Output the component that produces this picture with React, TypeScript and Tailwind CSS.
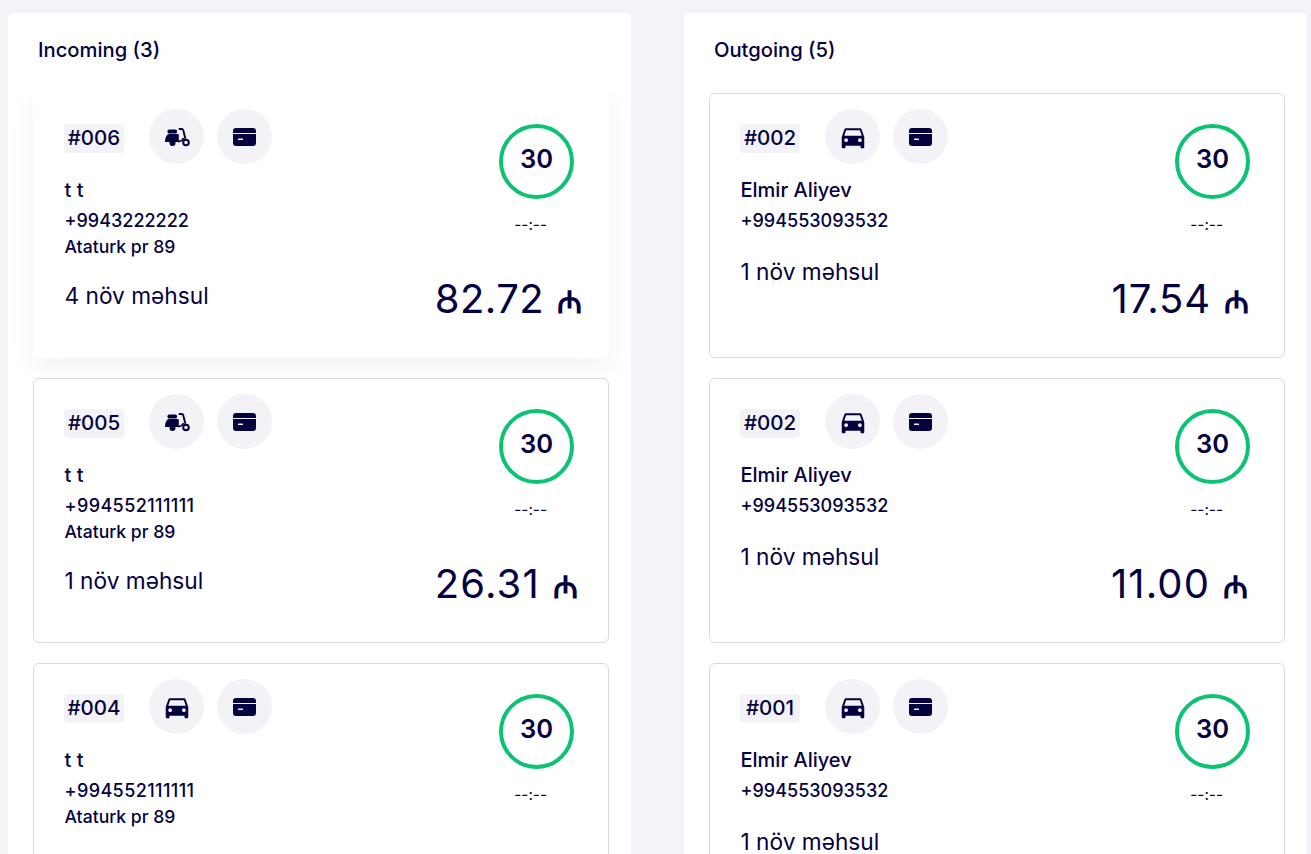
const navy = "text-[#04013f]";

function ScooterIcon() {
  return (
    <svg width="26" height="20" viewBox="0 0 26 20" fill="none">
      <rect x="3.500" y="2.500" width="9.500" height="4" rx="1.500" fill="#04013f" />
      <path d="M1 15c0-4.500 1.800-8 4.500-8h8c.8 0 1.300.5 1.300 1.200V14c0 .7-.5 1-1.300 1H1z" fill="#04013f" />
      <circle cx="8.500" cy="16" r="3" fill="#04013f" />
      <path d="M15.500 2h2.300c.8 0 1.200.4 1.400 1l2 8" stroke="#04013f" strokeWidth="1.900" strokeLinecap="round" />
      <path d="M14 14.500c2.500 0 4.500-1 5.500-3.500" stroke="#04013f" strokeWidth="1.800" />
      <circle cx="22" cy="15.500" r="2.800" stroke="#04013f" strokeWidth="2" />
    </svg>
  );
}

function CarIcon() {
  return (
    <svg width="30" height="30" viewBox="0 0 24 24" fill="#04013f">
      <path d="M18.92 6.01C18.72 5.42 18.16 5 17.5 5h-11c-.66 0-1.21.42-1.42 1.01L3 12v8c0 .55.45 1 1 1h1c.55 0 1-.45 1-1v-1h12v1c0 .55.45 1 1 1h1c.55 0 1-.45 1-1v-8l-2.08-5.99zM6.500 16c-.83 0-1.500-.67-1.500-1.500S5.670 13 6.500 13s1.500.67 1.500 1.500S7.330 16 6.500 16zm11 0c-.83 0-1.500-.67-1.500-1.500s.67-1.500 1.500-1.500 1.500.67 1.500 1.500-.67 1.500-1.500 1.500zM5 11l1.500-4.500h11L19 11H5z" />
    </svg>
  );
}

function PayCardIcon() {
  return (
    <svg width="23" height="18" viewBox="0 0 23 18">
      <rect width="23" height="18" rx="3" fill="#04013f" />
      <rect y="5" width="23" height="1" fill="#f3f3f7" />
      <rect x="5" y="10.500" width="5" height="1.500" rx=".5" fill="#f3f3f7" />
    </svg>
  );
}

function Round({ children }: { children: React.ReactNode }) {
  return (
    <div className="w-[55px] h-[55px] rounded-full bg-[#f3f3f7] flex items-center justify-center">
      {children}
    </div>
  );
}

type Order = {
  id: string;
  vehicle: "scooter" | "car";
  name: string;
  phone: string;
  phoneClass?: string;
  address?: string;
  count: string;
  price: string;
  priceClass: string;
  hovered?: boolean;
};

function OrderCard({ order }: { order: Order }) {
  return (
    <div
      className={
        "h-[265px] shrink-0 rounded-md flex justify-between bg-white " +
        (order.hovered
          ? "shadow-[0_8px_30px_rgba(4,1,63,0.06)]"
          : "border border-[#d9d9e6]")
      }
    >
      <div className={"flex flex-col " + (order.hovered ? "pl-[32px] pt-[16px]" : "pl-[31px] pt-[15px]")}>
        <div className="flex items-center">
          <span className="h-[29px] w-[60px] mt-[4px] -ml-[1px] rounded bg-[#f3f3f7] flex items-center justify-center text-[20.5px] font-medium">
            {order.id}
          </span>
          <div className="flex gap-[13px] ml-[25px]">
            <Round>{order.vehicle === "scooter" ? <ScooterIcon /> : <CarIcon />}</Round>
            <Round>
              <PayCardIcon />
            </Round>
          </div>
        </div>
        <p className="mt-[15px] -ml-[0.5px] text-[20px] leading-[22px] font-medium">{order.name}</p>
        <p className={"mt-[9px] -ml-[0.5px] text-[18px] leading-[22px] font-medium " + (order.phoneClass ?? "")}>
          {order.phone}
        </p>
        {order.address && (
          <p className="mt-[4px] -ml-[0.5px] text-[17.6px] leading-[22px] font-medium">{order.address}</p>
        )}
        <p className={"-ml-[0.5px] text-[22.7px] leading-[28px] font-normal " + (order.address ? "mt-[24px]" : "mt-[26px]")}>
          {order.count}
        </p>
      </div>
      <div className={"flex flex-col items-end " + (order.hovered ? "pt-[31px]" : "pt-[30px]")}>
        <div className={"w-[75px] h-[75px] pb-[4px] rounded-full border-[4px] border-[#0cc373] flex items-center justify-center text-[25.5px] font-semibold " + (order.hovered ? "mr-[35px]" : "mr-[34px]")}>
          30
        </div>
        <p className={"mt-[16px] text-[15.400px] leading-[20px] font-normal " + (order.hovered ? "mr-[62px]" : "mr-[61px]")}>--:--</p>
        <p className={"mt-[39px] flex items-baseline text-[40px] leading-[49px] font-normal " + order.priceClass}>
          {order.price}
          <span className="ml-[13px] text-[31px] tracking-normal font-['DejaVu_Sans',sans-serif] font-bold">₼</span>
        </p>
      </div>
    </div>
  );
}

function Column({ title, orders }: { title: string; orders: Order[] }) {
  return (
    <section className="w-[623px] bg-white rounded-t-md flex flex-col overflow-hidden">
      <div className="relative z-10 bg-white h-[80px] shrink-0 pl-[30px] pb-[6px] flex items-center text-[20.2px] font-medium">
        {title}
      </div>
      <div className="pl-[25px] pr-[22px] flex flex-col gap-[20px]">
        {orders.map((o, i) => (
          <OrderCard key={i} order={o} />
        ))}
      </div>
    </section>
  );
}

const incoming: Order[] = [
  { id: "#006", vehicle: "scooter", name: "t t", phone: "+9943222222", address: "Ataturk pr 89", count: "4 növ məhsul", price: "82.72", priceClass: "mr-[27px] tracking-[0.4px]", hovered: true },
  { id: "#005", vehicle: "scooter", name: "t t", phone: "+994552111111", phoneClass: "tracking-[0.4px]", address: "Ataturk pr 89", count: "1 növ məhsul", price: "26.31", priceClass: "mr-[30px] tracking-[1.2px]" },
  { id: "#004", vehicle: "car", name: "t t", phone: "+994552111111", phoneClass: "tracking-[0.4px]", address: "Ataturk pr 89", count: "1 növ məhsul", price: "26.31", priceClass: "mr-[30px] tracking-[1.2px]" },
];

const outgoing: Order[] = [
  { id: "#002", vehicle: "car", name: "Elmir Aliyev", phone: "+994553093532", count: "1 növ məhsul", price: "17.54", priceClass: "mr-[35px] tracking-[0.9px]" },
  { id: "#002", vehicle: "car", name: "Elmir Aliyev", phone: "+994553093532", count: "1 növ məhsul", price: "11.00", priceClass: "mr-[36px] tracking-[1.1px]" },
  { id: "#001", vehicle: "car", name: "Elmir Aliyev", phone: "+994553093532", count: "1 növ məhsul", price: "11.00", priceClass: "mr-[36px] tracking-[1.1px]" },
];

export default function App() {
  return (
    <main className={"h-[854px] overflow-hidden bg-[#f4f4f8] pt-[13px] pl-[8px] flex gap-[53px] font-['Inter',sans-serif] " + navy}>
      <Column title="Incoming (3)" orders={incoming} />
      <Column title="Outgoing (5)" orders={outgoing} />
    </main>
  );
}
